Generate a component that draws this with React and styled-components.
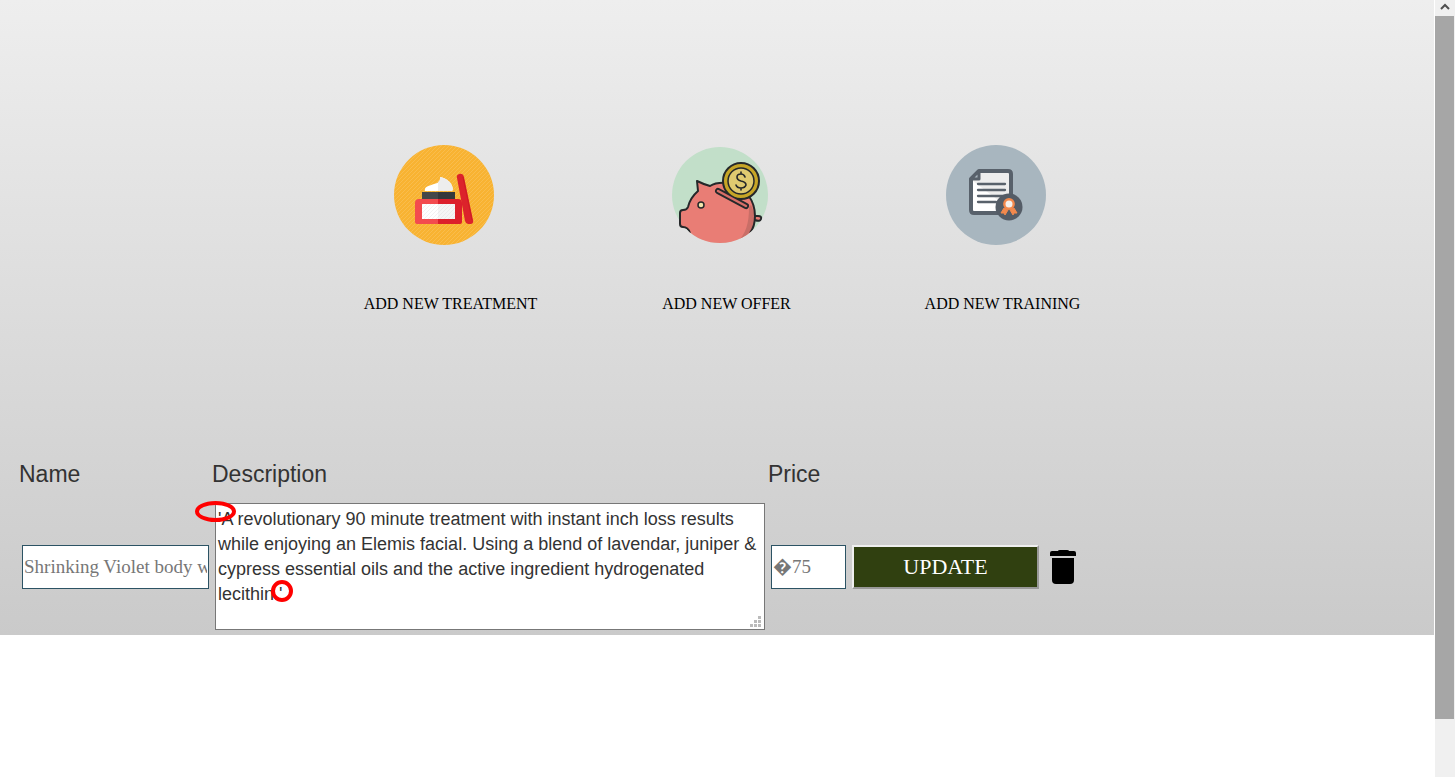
import React from 'react'
import styled, { createGlobalStyle } from 'styled-components'

const description =
  "'A revolutionary 90 minute treatment with instant inch loss results while enjoying an Elemis facial. Using a blend of lavendar, juniper & cypress essential oils and the active ingredient hydrogenated lecithin.'"

const TreatmentIcon = () => (
  <Icon viewBox="0 0 100 100" aria-hidden="true">
    <defs>
      <pattern id="stripes" width="4" height="4" patternUnits="userSpaceOnUse">
        <path d="M-1 1L1 -1M0 4L4 0M3 5L5 3" stroke="#fff" strokeOpacity=".13" strokeWidth="1" />
      </pattern>
      <pattern id="paper" width="4" height="4" patternUnits="userSpaceOnUse">
        <path d="M-1 1L1 -1M0 4L4 0M3 5L5 3" stroke="#ccc" strokeOpacity=".25" strokeWidth="1" />
      </pattern>
    </defs>
    <circle cx="50" cy="50" r="50" fill="#f8b332" />
    <circle cx="50" cy="50" r="50" fill="url(#stripes)" />
    <path d="M31 46C30 42 34 41 40 39C45 38 47 35 46 32C52 33 57 37 58 41C59 43 59 45 58 46Z" fill="#fff" />
    <path d="M46 32C52 33 57 37 58 41C59 43 59 45 58 46H44V37C46 36 46 34 46 32Z" fill="#ededed" />
    <path d="M28 47h33v7H28z" fill="#44474a" />
    <path d="M44 47h17v7H44z" fill="#34383b" />
    <path d="M25 54H44V79H23Q21 79 21 77V58Q21 54 25 54Z" fill="#f34b4e" />
    <path d="M44 54H64Q68 54 68 58V77Q68 79 66 79H44Z" fill="#dc1f2b" />
    <path d="M28 59h33v15H28z" fill="#fff" />
    <path d="M44 59h17v15H44z" fill="#f5f5f5" />
    <path d="M28 59h33v15H28z" fill="url(#paper)" />
    <path d="M63 33Q62 30 65 29Q69 28 70 32L79 75Q80 78 77 79L74 79Q72 79 71 76Z" fill="#dc232b" />
    <path d="M69 32L78 75" stroke="#cf1b24" strokeWidth="1" />
  </Icon>
)

const OfferIcon = () => (
  <Icon viewBox="0 0 100 100" aria-hidden="true">
    <defs>
      <clipPath id="round">
        <path d="M0 0H100V78H0Z" />
        <circle cx="50" cy="50" r="48" />
        <path d="M8 76H20V84H8Z" />
      </clipPath>
    </defs>
    <circle cx="50" cy="50" r="48" fill="#c2dfc9" />
    <path d="M85 71H88Q92 71 91 74Q90 77 85 75" fill="#e97d75" stroke="#25282a" strokeWidth="2" />
    <g clipPath="url(#round)">
      <path d="M19 100V87Q18 82 13 82Q10 82 10 79V68Q10 65 14 65H17Q20 53 28 46L27 36Q33 39 40 41Q46 37 58 38C77 42 85 57 85 72C85 80 83 85 80 88V100Z" fill="#e97d75" />
      <path d="M79 62C79 79 76 88 67 98H80V88C86 80 86 70 81 60Z" fill="#c96e67" />
      <path d="M20 88Q18 82 13 82Q10 82 10 79V68Q10 65 13 65Q17 65 18 62Q20 53 28 46L27 36Q33 39 40 41Q46 37 58 38C77 42 85 57 85 71C85 79 83 84 80 88" fill="none" stroke="#25282a" strokeWidth="2" strokeLinejoin="round" />
    </g>
    <circle cx="31" cy="60" r="3" fill="#f3e6ac" stroke="#25282a" strokeWidth="1.5" />
    <path d="M48 46L76 61" stroke="#25282a" strokeWidth="6" strokeLinecap="round" />
    <circle cx="71" cy="36" r="18" fill="#c6a526" stroke="#25282a" strokeWidth="2" />
    <circle cx="71" cy="36" r="13" fill="#dfca70" stroke="#25282a" strokeWidth="1.5" />
    <path d="M48 46L76 61" stroke="#d76e68" strokeWidth="2.5" strokeLinecap="round" />
    <path d="M75 32Q74 29 71 29Q67 29 67 32Q67 35 71 36Q76 37 76 40Q75 43 71 43Q67 43 66 40M71 27V29M71 43V45" fill="none" stroke="#25282a" strokeWidth="1.6" strokeLinecap="round" />
  </Icon>
)

const TrainingIcon = () => (
  <Icon viewBox="0 0 100 100" aria-hidden="true">
    <circle cx="50" cy="50" r="50" fill="#a8b6bf" />
    <path d="M33 26H62Q65 26 65 29V65Q65 68 62 68H28Q25 68 25 65V34Z" fill="#fff" />
    <path d="M33 26H62Q65 26 65 29V65L27 36Z" fill="#ededed" />
    <path d="M33 26H62Q65 26 65 29V65Q65 68 62 68H28Q25 68 25 65V34Z" fill="none" stroke="#58616b" strokeWidth="4" strokeLinejoin="round" />
    <path d="M33 26V34H25Z" fill="#a8b6bf" stroke="#58616b" strokeWidth="3" strokeLinejoin="round" />
    <path d="M32 39H59M32 45H59M32 51H59M32 57H50" stroke="#58616b" strokeWidth="2.3" strokeLinecap="round" />
    <circle cx="63" cy="62" r="13.5" fill="#545c66" />
    <path d="M58 63L55 68L58 68L59 70L62 65ZM68 63L71 68L68 68L67 70L64 65Z" fill="#f3894d" stroke="#f3894d" strokeWidth="1" />
    <circle cx="63" cy="59" r="4.7" fill="#f4f1ed" stroke="#f3894d" strokeWidth="2.4" />
  </Icon>
)

const actions = [
  { label: 'ADD NEW TREATMENT', Picture: TreatmentIcon },
  { label: 'ADD NEW OFFER', Picture: OfferIcon },
  { label: 'ADD NEW TRAINING', Picture: TrainingIcon },
]

const App = () => {
  return (
    <Page>
      <GlobalStyle />
      <Content>
        <Panel>
          <Actions>
            {actions.map(({ label, Picture }) => (
              <ActionLink href="#" key={label}>
                <Picture />
                <span>{label}</span>
              </ActionLink>
            ))}
          </Actions>
          <Treatments>
            <thead>
              <tr>
                <Heading id="name">Name</Heading>
                <Heading id="description">Description</Heading>
                <Heading id="price">Price</Heading>
              </tr>
            </thead>
            <tbody>
              <tr>
                <Cell>
                  <TextInput $width={187} aria-labelledby="name" placeholder="Shrinking Violet body wrap" />
                </Cell>
                <Cell>
                  <DescriptionBox>
                    <Description aria-labelledby="description" defaultValue={description} spellCheck="false" />
                    <Grip viewBox="0 0 11 11" aria-hidden="true">
                      <path d="M8 0h3v3H8zM4 4h3v3H4zM8 4h3v3H8zM0 8h3v3H0zM4 8h3v3H4zM8 8h3v3H8z" />
                    </Grip>
                    <OpeningMark />
                    <ClosingMark />
                  </DescriptionBox>
                </Cell>
                <Cell>
                  <TextInput $width={75} aria-labelledby="price" placeholder="�75" />
                </Cell>
                <Cell>
                  <UpdateButton type="button">UPDATE</UpdateButton>
                </Cell>
                <Cell>
                  <DeleteButton type="button" aria-label="Delete treatment">
                    <TrashIcon viewBox="0 0 26 34" aria-hidden="true">
                      <path d="M8 1Q8 0 10 0H17Q19 0 19 1H24Q26 1 26 3V6H0V3Q0 1 2 1Z" />
                      <path d="M2 8H24V30Q24 34 20 34H6Q2 34 2 30Z" />
                    </TrashIcon>
                  </DeleteButton>
                </Cell>
              </tr>
            </tbody>
          </Treatments>
        </Panel>
      </Content>
      <Scrollbar aria-hidden="true">
        <ScrollArrow>
          <svg width="10" height="7" viewBox="0 0 10 7">
            <path d="M1 6L5 2L9 6" fill="none" stroke="#505050" strokeWidth="2" />
          </svg>
        </ScrollArrow>
        <ScrollTrack>
          <ScrollThumb />
        </ScrollTrack>
      </Scrollbar>
    </Page>
  )
}

export default App

const GlobalStyle = createGlobalStyle`
  * {
    box-sizing: border-box;
  }
  body {
    margin: 0;
    background: #fff;
    color: #333;
    font-family: "Liberation Sans", Arial, sans-serif;
  }
`

const Page = styled.div`
  display: flex;
  height: 100vh;
`

const Content = styled.main`
  flex: 1;
  min-width: 0;
  overflow: hidden;
`

const Panel = styled.section`
  padding: 145px 0 5px 19px;
  background: linear-gradient(#eee, #cacaca);
`

const Actions = styled.nav`
  display: grid;
  grid-template-columns: repeat(3, minmax(0, 276px));
  justify-content: center;
  margin-bottom: 142px;
`

const ActionLink = styled.a`
  display: flex;
  flex-direction: column;
  align-items: center;
  gap: 48px;
  color: #000;
  font-family: "Liberation Serif", serif;
  font-size: 16px;
  line-height: 22px;
  text-decoration: none;
`

const Icon = styled.svg`
  width: 100px;
  height: 100px;
  margin-right: 14px;
`

const Treatments = styled.table`
  border-spacing: 0;
`

const Heading = styled.th`
  padding: 0 0 12px;
  font-size: 23px;
  font-weight: normal;
  line-height: 34px;
  text-align: left;
`

const Cell = styled.td`
  padding: 0 3px;
  vertical-align: middle;
`

const TextInput = styled.input`
  display: block;
  width: ${props => props.$width}px;
  height: 44px;
  padding: 1px;
  border: 1px solid #2c5364;
  background: #fff;
  font-family: "Liberation Serif", serif;
  font-size: 19px;

  &::placeholder {
    color: #777;
  }
`

const DescriptionBox = styled.div`
  position: relative;
`

const Description = styled.textarea`
  display: block;
  width: 550px;
  height: 127px;
  padding: 3px 2px 2px;
  border: 1px solid #777;
  background: #fff;
  color: #333;
  font-family: inherit;
  font-size: 18px;
  line-height: 25px;
  resize: none;
`

const Grip = styled.svg`
  position: absolute;
  right: 4px;
  bottom: 3px;
  width: 11px;
  height: 11px;
  fill: #bbb;
`

const Mark = styled.span`
  position: absolute;
  border: 4px solid #f00;
  border-radius: 50%;
  pointer-events: none;
`

const OpeningMark = styled(Mark)`
  top: -2px;
  left: -20px;
  width: 41px;
  height: 21px;
`

const ClosingMark = styled(Mark)`
  top: 77px;
  left: 56px;
  width: 22px;
  height: 22px;
`

const UpdateButton = styled.button`
  display: block;
  width: 187px;
  height: 44px;
  padding: 0;
  border: 2px solid;
  border-color: #efefef #999 #999 #efefef;
  background: #304010;
  color: #fff;
  font-family: "Liberation Serif", serif;
  font-size: 22px;
`

const DeleteButton = styled.button`
  display: block;
  padding: 0 5px;
  border: 0;
  background: none;
`

const TrashIcon = styled.svg`
  display: block;
  width: 26px;
  height: 34px;
`

const Scrollbar = styled.aside`
  display: flex;
  flex-direction: column;
  width: 21px;
  border-left: 1px solid #fff;
  background: #f0f0f0;
`

const ScrollArrow = styled.div`
  display: flex;
  align-items: center;
  justify-content: center;
  height: 16px;
  padding-bottom: 4px;
`

const ScrollTrack = styled.div`
  flex: 1;
  padding-right: 1px;
`

const ScrollThumb = styled.div`
  height: 92.4%;
  background: #a6a6a6;
`
